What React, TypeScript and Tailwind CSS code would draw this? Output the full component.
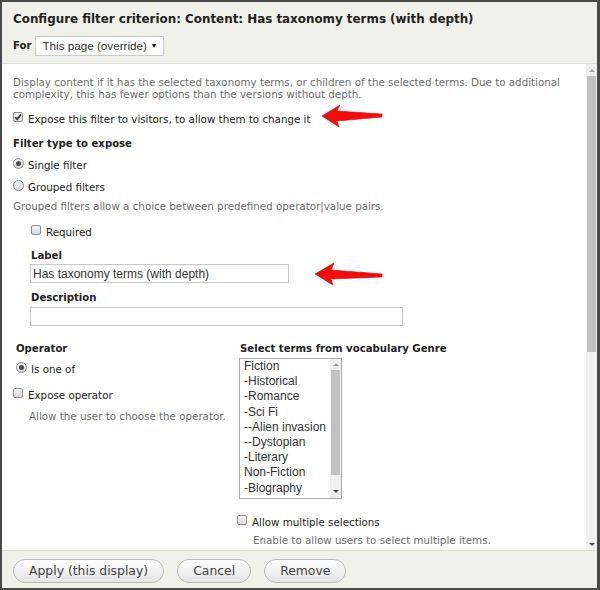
const terms = [
  "Fiction",
  "-Historical",
  "-Romance",
  "-Sci Fi",
  "--Alien invasion",
  "--Dystopian",
  "-Literary",
  "Non-Fiction",
  "-Biography",
];

const Checkbox = ({ checked }: { checked?: boolean }) => (
  <span className="relative block w-[10px] h-[10px] shrink-0 rounded-[2px] border border-[#8e8e8e] bg-linear-to-b from-[#f6f6f6] to-[#d9d9d9]">
    {checked && (
      <svg viewBox="0 0 10 10" className="absolute left-[-1px] top-[-1px] w-[10px] h-[10px]">
        <path d="M2.2 5.2 L4.2 7.3 L8 2.4" fill="none" stroke="#333" strokeWidth="1.7" />
      </svg>
    )}
  </span>
);

const Radio = ({ checked }: { checked?: boolean }) => (
  <span className="flex items-center justify-center w-[11px] h-[11px] shrink-0 rounded-full border border-[#8e8e8e] bg-linear-to-b from-[#f6f6f6] to-[#d6d6d6]">
    {checked && <span className="block w-[5px] h-[5px] rounded-full bg-[#4b4b4b]" />}
  </span>
);

const UpArrow = ({ color }: { color: string }) => (
  <span
    className="block w-0 h-0 border-x-[3px] border-x-transparent border-b-[3px]"
    style={{ borderBottomColor: color }}
  />
);

const DownArrow = ({ color }: { color: string }) => (
  <span
    className="block w-0 h-0 border-x-[3px] border-x-transparent border-t-[3px]"
    style={{ borderTopColor: color }}
  />
);

const Button = ({ label }: { label: string }) => (
  <button className="h-[24px] px-[15px] rounded-[20px] border border-[#b9b9b9] bg-linear-to-b from-[#fefefe] to-[#e4e4e4] text-[12.4px] text-[#444] leading-none">
    {label}
  </button>
);

export default function App() {
  return (
    <div className="relative w-[600px] h-[590px] bg-[#4a4a4a] pt-[2px] pl-[2px] pr-[3px] pb-[2px] font-['DejaVu_Sans',sans-serif] text-[#333]">
      <div className="flex flex-col h-full bg-white">
        {/* header */}
        <div className="h-[62px] shrink-0 bg-[#f1f1ec] border-b border-[#dcdcd6] pl-[11px] pt-[9px]">
          <h1 className="text-[11.9px] font-bold leading-[16px] text-[#222]">
            Configure filter criterion: Content: Has taxonomy terms (with depth)
          </h1>
          <div className="mt-[9px] flex items-center gap-[4px]">
            <span className="text-[10.1px] font-bold text-[#222]">For</span>
            <div className="flex items-center justify-between w-[129px] h-[20px] bg-white border border-[#cacaca] pl-[6px] pr-[6px] font-['Liberation_Sans',Arial,sans-serif] text-[11.7px] text-[#333]">
              <span>This page (override)</span>
              <span className="text-[7px] text-[#111]">▼</span>
            </div>
          </div>
        </div>

        {/* scrolling body */}
        <div className="flex h-[486px] shrink-0">
          <div className="flex-1 overflow-hidden pl-[11px] pt-[12px] text-[10.3px]">
            <p className="leading-[12px] text-[#6d6d6d]">
              Display content if it has the selected taxonomy terms, or children of the selected terms. Due to additional
              <br />
              complexity, this has fewer options than the versions without depth.
            </p>

            <div className="mt-[12px] flex items-start gap-[5px] leading-[14px] text-[#222]">
              <Checkbox checked />
              <span>Expose this filter to visitors, to allow them to change it</span>
            </div>

            <div className="mt-[11px] text-[10.15px] font-bold leading-[14px] text-[#222]">Filter type to expose</div>

            <div className="mt-[7px] flex items-start gap-[4px] leading-[14px] text-[#222]">
              <Radio checked />
              <span>Single filter</span>
            </div>
            <div className="mt-[8px] flex items-start gap-[4px] leading-[14px] text-[#222]">
              <Radio />
              <span>Grouped filters</span>
            </div>
            <p className="mt-[5px] leading-[14px] text-[#6d6d6d]">
              Grouped filters allow a choice between predefined operator|value pairs.
            </p>

            <div className="ml-[18px]">
              <div className="mt-[12px] flex items-start gap-[5px] leading-[14px] text-[#222]">
                <Checkbox />
                <span>Required</span>
              </div>
              <div className="mt-[10px] text-[10.15px] font-bold leading-[14px] text-[#222]">Label</div>
              <div className="mt-[1px] -ml-[1px] w-[259px] h-[19px] border border-[#c8c8c8] flex items-center pl-[2px] font-['Liberation_Sans',Arial,sans-serif] text-[12px] text-[#333]">
                Has taxonomy terms (with depth)
              </div>
              <div className="mt-[8px] text-[10.15px] font-bold leading-[14px] text-[#222]">Description</div>
              <div className="mt-[2px] -ml-[1px] w-[373px] h-[19px] border border-[#c8c8c8]" />
            </div>

            <div className="mt-[16px] flex">
              <div className="w-[224px] shrink-0">
                <div className="pl-[3px] text-[10.15px] font-bold leading-[14px] text-[#222]">Operator</div>
                <div className="mt-[6px] pl-[3px] flex items-start gap-[4px] leading-[14px] text-[#222]">
                  <Radio checked />
                  <span>Is one of</span>
                </div>
                <div className="mt-[12px] flex items-start gap-[5px] leading-[14px] text-[#222]">
                  <Checkbox />
                  <span>Expose operator</span>
                </div>
                <p className="mt-[7px] pl-[16px] leading-[14px] text-[#6d6d6d]">
                  Allow the user to choose the operator.
                </p>
              </div>

              <div>
                <div className="pl-[3px] text-[10.15px] font-bold leading-[14px] text-[#222]">
                  Select terms from vocabulary Genre
                </div>
                <div className="mt-[2px] ml-[2px] flex w-[103px] h-[141px] border border-[#ababab] bg-white">
                  <ul className="flex-1 pl-[4px] font-['Liberation_Sans',Arial,sans-serif] text-[12px] leading-[15.2px] text-[#333]">
                    {terms.map((term) => (
                      <li key={term} className="whitespace-nowrap">
                        {term}
                      </li>
                    ))}
                  </ul>
                  <div className="w-[11px] flex flex-col items-center bg-[#f1f1f1]">
                    <div className="h-[10px] flex items-center">
                      <UpArrow color="#a3a3a3" />
                    </div>
                    <div className="mt-[1px] w-[9px] h-[105px] bg-[#c1c1c1]" />
                    <div className="flex-1 flex items-end pb-[5px]">
                      <DownArrow color="#505050" />
                    </div>
                  </div>
                </div>
                <div className="mt-[16px] flex items-start gap-[5px] leading-[14px] text-[#222]">
                  <Checkbox />
                  <span>Allow multiple selections</span>
                </div>
                <p className="mt-[4px] pl-[16px] leading-[14px] text-[#6d6d6d]">
                  Enable to allow users to select multiple items.
                </p>
              </div>
            </div>
          </div>

          {/* main scrollbar */}
          <div className="w-[11px] shrink-0 flex flex-col items-center bg-[#f1f1f1]">
            <div className="h-[12px] flex items-center">
              <UpArrow color="#a3a3a3" />
            </div>
            <div className="w-[9px] h-[276px] bg-[#c1c1c1]" />
            <div className="flex-1 flex items-end pb-[4px]">
              <DownArrow color="#505050" />
            </div>
          </div>
        </div>

        {/* footer */}
        <div className="flex-1 bg-[#f1f1ec] border-t border-[#dcdcd6] pl-[11px] pt-[8px] flex items-start gap-[13px]">
          <Button label="Apply (this display)" />
          <Button label="Cancel" />
          <Button label="Remove" />
        </div>
      </div>

      {/* annotation arrows */}
      <svg className="absolute left-0 top-0 pointer-events-none" width="600" height="590">
        <polygon
          points="322,116 340,105 337,111 382,114 382,117 337,121 339,127"
          fill="#f20d0d"
          stroke="#d40000"
          strokeWidth="0.6"
        />
        <polygon
          points="315,274 334,263 331,270 382,274 382,277 331,279 333,285"
          fill="#f20d0d"
          stroke="#d40000"
          strokeWidth="0.6"
        />
      </svg>
    </div>
  );
}
